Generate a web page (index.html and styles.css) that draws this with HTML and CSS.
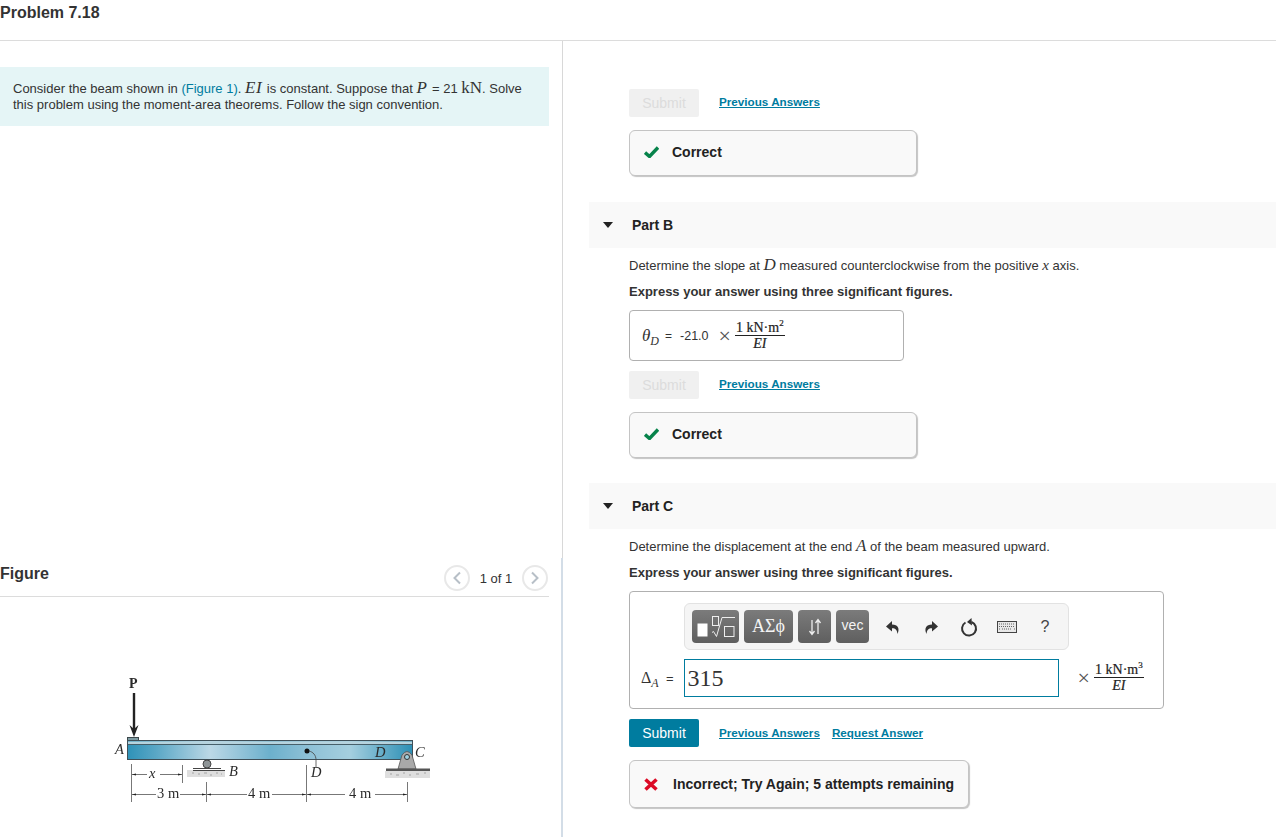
FILE: index.html
```html
<!DOCTYPE html>
<html lang="en">
<head>
<meta charset="utf-8">
<title>Problem 7.18</title>
<link rel="stylesheet" href="styles.css">
</head>
<body>
<header class="page-head"><h1>Problem 7.18</h1></header>
<main class="columns">
  <section class="left">
    <div class="intro">
      <p>Consider the beam shown in <a href="#fig">(Figure 1)</a>. <span class="m-big">EI</span> is constant. Suppose that <span class="m-big">P</span> = 21 <span class="m-unit">kN</span>. Solve<br>this problem using the moment-area theorems. Follow the sign convention.</p>
    </div>
    <div class="figure" id="fig">
      <div class="fig-head">
        <h2>Figure</h2>
        <div class="pager">
          <span class="circle"><svg width="10" height="14" viewBox="0 0 10 14"><path class="chev" d="M8 1.500 2.500 7 8 12.500"/></svg></span>
          <span class="count">1 of 1</span>
          <span class="circle"><svg width="10" height="14" viewBox="0 0 10 14"><path class="chev" d="M2 1.500 7.500 7 2 12.500"/></svg></span>
        </div>
      </div>
      <svg class="beam" width="549" height="177" viewBox="0 660 549 177">
        <defs>
          <linearGradient id="steel" x1="0" x2="1" y1="0" y2="0">
            <stop offset="0" stop-color="#2e92b8"/>
            <stop offset=".1" stop-color="#5aa7c6"/>
            <stop offset=".29" stop-color="#bcd8e6"/>
            <stop offset=".5" stop-color="#6cb0cc"/>
            <stop offset=".63" stop-color="#8dc0d6"/>
            <stop offset=".78" stop-color="#a5cfdf"/>
            <stop offset="1" stop-color="#2c8fb5"/>
          </linearGradient>
        </defs>
        <text class="t-b" x="129" y="688">P</text>
        <path class="heavy" d="M134 693V729"/>
        <path class="solid" d="M129.500 725 134 737 138.500 725 134 729Z"/>
        <rect class="plate" x="127.500" y="737.500" width="11" height="3"/>
        <rect class="steel" x="127.500" y="740.500" width="285" height="19"/>
        <rect class="strip" x="128" y="741.500" width="284" height="2.500"/>
        <path class="edge" d="M128 744.500H412"/>
        <text class="t-i" x="115" y="754">A</text>

        <rect class="ground" x="187" y="770" width="38" height="7"/>
        <circle class="ball" cx="207" cy="764" r="4"/>
        <path class="dark-line" d="M193 768.500H221M193 770.500H225"/>
        <path class="speck" d="M192 773h2M198 774h2M204 773h3M210 775h2M216 773h2M221 774h1"/>
        <text class="t-i" x="229" y="776">B</text>

        <path class="dim" d="M131.500 764V802M182.500 765V783M206.500 782V802M306.500 765V802M407.500 782V802"/>
        <path class="dim" d="M132 774.500H147M160 774.500H182M132 794.500H156M180 794.500H206M207 794.500H247M272 794.500H306M307 794.500H345M375 794.500H407"/>
        <path class="solid" d="M132 774.500 136 773.500V775.500ZM182 774.500 178 773.500V775.500ZM132 794.500 136 793.500V795.500ZM206 794.500 202 793.500V795.500ZM207 794.500 211 793.500V795.500ZM306 794.500 302 793.500V795.500ZM307 794.500 311 793.500V795.500ZM407 794.500 403 793.500V795.500Z"/>
        <text class="t-i" x="149" y="778">x</text>
        <text class="t-r" x="157" y="798">3 m</text>
        <text class="t-r" x="248" y="798">4 m</text>
        <text class="t-r" x="349" y="798">4 m</text>

        <circle class="dot" cx="307" cy="751" r="2.500"/>
        <path class="thin" d="M309 751C313 752 316 755 316 760V767"/>
        <text class="t-i" x="311" y="777">D</text>
        <text class="t-i" x="375" y="757">D</text>
        <text class="t-i" x="415" y="757">C</text>

        <rect class="ground" x="385" y="771" width="45" height="7"/>
        <path class="support" d="M398 769 402 755Q407 748 412 755L416 769Z"/>
        <circle class="pin" cx="407" cy="757" r="2.500"/>
        <rect class="base" x="386" y="768.500" width="44" height="2.500"/>
        <path class="speck" d="M390 774h2M396 775h3M403 773h2M409 775h2M416 774h3M424 773h2"/>
      </svg>
    </div>
  </section>

  <section class="right">
    <div class="action-row first">
      <button class="submit off" type="button">Submit</button>
      <a class="link" href="#a">Previous Answers</a>
    </div>
    <div class="feedback wide">
      <svg class="mark" width="15" height="12" viewBox="0 0 15 12"><path class="check" d="M1 6.500 5.500 10.500 14 1.500"/></svg>
      <span class="correct-text">Correct</span>
    </div>

    <div class="part-head">
      <svg class="caret" width="10" height="6" viewBox="0 0 10 6"><path d="M0 0H10L5 6Z"/></svg>
      <span>Part B</span>
    </div>
    <p class="prompt">Determine the slope at <span class="m-big">D</span> measured counterclockwise from the positive <span class="m-x">x</span> axis.</p>
    <p class="prompt bold">Express your answer using three significant figures.</p>
    <div class="answer-box">
      <span class="sym"><i>θ</i><sub>D</sub></span>
      <span class="eq">=</span>
      <span class="val">-21.0</span>
      <span class="times">×</span>
      <span class="frac"><span class="num">1 kN·m<sup>2</sup></span><span class="den">EI</span></span>
    </div>
    <div class="action-row">
      <button class="submit off" type="button">Submit</button>
      <a class="link" href="#a">Previous Answers</a>
    </div>
    <div class="feedback wide">
      <svg class="mark" width="15" height="12" viewBox="0 0 15 12"><path class="check" d="M1 6.500 5.500 10.500 14 1.500"/></svg>
      <span class="correct-text">Correct</span>
    </div>

    <div class="part-head second">
      <svg class="caret" width="10" height="6" viewBox="0 0 10 6"><path d="M0 0H10L5 6Z"/></svg>
      <span>Part C</span>
    </div>
    <p class="prompt">Determine the displacement at the end <span class="m-big">A</span> of the beam measured upward.</p>
    <p class="prompt bold">Express your answer using three significant figures.</p>
    <div class="editor">
      <div class="toolbar">
        <span class="tool t1">
          <svg width="38" height="26" viewBox="0 0 38 26"><rect class="w" x=".5" y="9.500" width="10" height="13"/><rect class="o" x="15.500" y="2.500" width="6" height="9"/><path class="o" d="M15 18.500 16.500 17.500 19.500 22.500 25 3.500H38"/><rect class="o" x="27.500" y="12.500" width="9.500" height="10"/></svg>
        </span>
        <span class="tool t2">ΑΣϕ</span>
        <span class="tool t3">
          <svg width="16" height="18" viewBox="0 0 16 18"><path class="o2" d="M5 2V16M2.500 13 5 16.500 7.500 13M11 16V2M8.500 5 11 1.500 13.500 5"/></svg>
        </span>
        <span class="tool t4">vec</span>
        <span class="icons">
          <svg width="16" height="16" viewBox="0 0 16 16"><path class="ink" d="M7 2 1 7.500 7 12.500V9.200C10 9 12 10.500 12.500 15 15 9.500 13 5.500 7 5.500Z"/></svg>
          <svg width="16" height="16" viewBox="0 0 16 16"><path class="ink" d="M9 2 15 7.500 9 12.500V9.200C6 9 4 10.500 3.500 15 1 9.500 3 5.500 9 5.500Z"/></svg>
          <svg width="18" height="20" viewBox="0 0 18 20"><path class="ring" d="M5.500 5.500A7 7 0 1 0 11.500 5"/><path class="ink" d="M11.500 1 7 5 12 8.500Z"/></svg>
          <svg width="20" height="12" viewBox="0 0 20 12"><rect class="kb" x=".5" y=".5" width="19" height="11"/><path class="kb-k" d="M2 3h16M2 5.500h16M2 8h1M5 8h10M17 8h1"/></svg>
          <span class="help">?</span>
        </span>
      </div>
      <div class="entry">
        <span class="sym delta">Δ<sub>A</sub></span>
        <span class="eq">=</span>
        <input class="field" type="text" value="315" aria-label="Answer">
        <span class="times">×</span>
        <span class="frac"><span class="num">1 kN·m<sup>3</sup></span><span class="den">EI</span></span>
      </div>
    </div>
    <div class="action-row">
      <button class="submit" type="button">Submit</button>
      <a class="link" href="#a">Previous Answers</a>
      <a class="link tight" href="#r">Request Answer</a>
    </div>
    <div class="feedback">
      <svg class="mark" width="14" height="13" viewBox="0 0 14 13"><path class="cross" d="M1.500 1.500 12.500 11.500M12.500 1.500 1.500 11.500"/></svg>
      <span class="wrong-text">Incorrect; Try Again; 5 attempts remaining</span>
    </div>
  </section>
</main>
</body>
</html>
```

FILE: styles.css
```css
* { box-sizing: border-box; }
html, body { margin: 0; height: 837px; overflow: hidden; background: #fff; }
body { font-family: "Liberation Sans", Arial, sans-serif; color: #333; font-size: 14px; }
p { margin: 0; }

.page-head { height: 41px; border-bottom: 1px solid #dcdcdc; }
.page-head h1 { margin: 0; font-size: 16px; line-height: 26px; color: #333; }

.columns { display: flex; height: 796px; }
.left { width: 563px; flex: none; border-right: 1px solid #d8d8d8; display: flex; flex-direction: column; }
.right { flex: 1; padding-left: 26px; }

.intro { margin: 26px 13px 0 0; height: 59px; padding: 14px 13px 0; background: #e5f5f6; font-size: 13px; }
.intro p { line-height: 16px; }
.intro a { color: #007c9f; text-decoration: none; }
.m-big { font-family: "Liberation Serif", serif; font-style: italic; font-size: 17px; line-height: 0; }
.intro .m-big { letter-spacing: .6px; margin-right: 1px; }
.m-unit { font-family: "Liberation Serif", serif; font-size: 17px; line-height: 0; }
.m-x { font-family: "Liberation Serif", serif; font-style: italic; font-size: 15px; line-height: 0; }

.figure { margin-top: 432px; flex: 1; margin-right: -1px; padding-right: 12px; border-right: 2px solid #d3dde7; }
.fig-head { position: relative; height: 39px; border-bottom: 1px solid #dcdcdc; display: flex; justify-content: space-between; align-items: flex-start; }
.fig-head h2 { margin: 6px 0 0; font-size: 16px; line-height: 20px; color: #333; }
.pager { display: flex; align-items: center; margin: 6px 1px 0 0; }
.circle { width: 26px; height: 26px; border: 2px solid #e8e8e8; border-radius: 50%; display: flex; align-items: center; justify-content: center; }
.chev { fill: none; stroke: #b7bfc7; stroke-width: 2; }
.count { width: 52px; padding-top: 2px; text-align: center; font-size: 13px; line-height: 26px; color: #333; }

.beam { display: block; margin-top: 63px; filter: blur(.3px); }
.beam text { fill: #2a2a2a; font-family: "Liberation Serif", serif; font-size: 14.500px; }
.beam .t-b { font-weight: 700; font-size: 14px; }
.beam .t-i { font-style: italic; }
.heavy { stroke: #222; stroke-width: 2.400; fill: none; }
.solid { fill: #222; }
.plate { fill: #7f9ca3; stroke: #3c474b; stroke-width: 1; }
.steel { fill: url(#steel); stroke: #3f4f58; stroke-width: 1; }
.strip { fill: #b6d3de; }
.edge { stroke: #47606b; stroke-width: 1; fill: none; }
.ground { fill: #dedede; }
.ball { fill: #8e9496; stroke: #444; stroke-width: 1; }
.dark-line { stroke: #444; stroke-width: 1; fill: none; }
.speck { stroke: #a4a4a4; stroke-width: 1; fill: none; }
.dim { stroke: #777; stroke-width: 1; fill: none; }
.dot { fill: #111; }
.thin { stroke: #444; stroke-width: .8; fill: none; }
.support { fill: #a9a9a9; stroke: #555; stroke-width: .8; }
.pin { fill: #9ed0e0; stroke: #333; stroke-width: 1; }
.base { fill: #555; }

.action-row { display: flex; align-items: center; margin-top: 10px; height: 28px; }
.action-row.first { margin-top: 48px; }
.submit { width: 70px; height: 28px; padding: 0; border: 0; border-radius: 2px; background: #007c9f; color: #fff; font: 14px "Liberation Sans", Arial, sans-serif; }
.submit.off { background: #f0f0f0; color: #dcdcdc; }
.link { margin-left: 20px; margin-top: -2px; font-size: 11.700px; font-weight: 700; color: #007c9f; text-decoration: underline; }
.off + .link { margin-top: -4px; }
.link.tight { margin-left: 12px; }
.action-row, .answer-box, .feedback, .editor, .prompt { margin-left: 40px; }

.feedback { display: flex; align-items: center; width: 340px; height: 48px; margin-top: 13px; padding: 0 0 0 14px; border: 1px solid #c4c4c4; border-radius: 6px; background: #f9f9f9; box-shadow: 1px 1px 1px #c4c4c4; font-weight: 700; color: #222; }
.feedback.wide { width: 288px; height: 46px; padding-bottom: 2px; }
.mark { flex: none; }
.check { fill: none; stroke: #07834b; stroke-width: 3.400; }
.cross { fill: none; stroke: #dc0a26; stroke-width: 3.600; }
.correct-text { margin-left: 13px; }
.wrong-text { margin-left: 15px; }

.part-head { display: flex; align-items: center; height: 46px; margin-top: 26px; padding-left: 14px; background: #f9f9f9; font-weight: 700; color: #222; }
.part-head.second { margin-top: 25px; }
.part-head span { margin-left: 19px; }
.caret { fill: #222; }

.prompt { height: 16px; margin-top: 10px; line-height: 16px; font-size: 13px; }
.prompt.bold { font-weight: 700; font-size: 13px; }

.answer-box { display: flex; align-items: center; width: 275px; height: 51px; margin-top: 10px; padding-left: 12px; border: 1px solid #b0b0b0; border-radius: 4px; font-size: 12px; }
.sym { font-family: "Liberation Serif", serif; font-size: 17px; }
.sym sub { font-size: 12px; font-style: italic; line-height: 0; }
.eq { margin-left: 6px; font-size: 12px; }
.val { margin-left: 8px; font-size: 12.500px; }
.times { margin-left: 10px; font-family: "Liberation Serif", serif; font-size: 22px; font-weight: 400; color: #555; line-height: 16px; }
.frac { display: inline-flex; flex-direction: column; align-items: center; margin-left: 4px; font-family: "Liberation Serif", serif; font-size: 14px; color: #222; }
.num { padding: 0 1px 1px; border-bottom: 1px solid #222; line-height: 13px; white-space: nowrap; -webkit-text-stroke: .2px #222; }
.num sup { font-size: 9px; line-height: 0; }
.den { font-style: italic; line-height: 15px; -webkit-text-stroke: .2px #222; }

.editor { width: 535px; height: 118px; margin-top: 10px; border: 1px solid #b0b0b0; border-radius: 4px; padding: 11px 0 0 54px; }
.toolbar { display: flex; align-items: center; width: 385px; height: 47px; padding-left: 7px; border: 1px solid #e2e2e2; border-radius: 6px; background: #f5f5f5; }
.tool { display: flex; align-items: center; justify-content: center; height: 33px; margin-right: 5px; border-radius: 4px; background: linear-gradient(#7b7b7b, #5f5f5f); color: #f4f4f4; }
.t1 { width: 47px; }
.t2 { width: 49px; font-family: "Liberation Serif", serif; font-size: 18px; }
.t3 { width: 33px; }
.t4 { width: 33px; margin-right: 0; font-size: 14px; padding-bottom: 3px; }
.w { fill: #fff; }
.o { fill: none; stroke: #eee; stroke-width: 1; }
.o2 { fill: none; stroke: #eee; stroke-width: 1.300; }
.icons { display: grid; grid-template-columns: repeat(5, 38px); justify-items: center; align-items: center; margin-left: 5px; }
.ink { fill: #333; }
.ring { fill: none; stroke: #333; stroke-width: 2; }
.kb { fill: #e8e8e8; stroke: #444; }
.kb-k { stroke: #666; stroke-width: 1; stroke-dasharray: 1 1; fill: none; }
.help { font-size: 16px; color: #444; }

.entry { display: flex; align-items: center; margin-top: 9px; margin-left: -43px; }
.delta { width: 24px; font-size: 16px; }
.entry .eq { margin-left: 1px; font-size: 13px; }
.field { width: 375px; height: 38px; margin-left: 10px; padding: 0 3px; border: 1px solid #007c9f; outline: 0; border-radius: 0; font: 24px "Liberation Serif", serif; color: #333; }
.entry .times { margin-left: 19px; }
```
